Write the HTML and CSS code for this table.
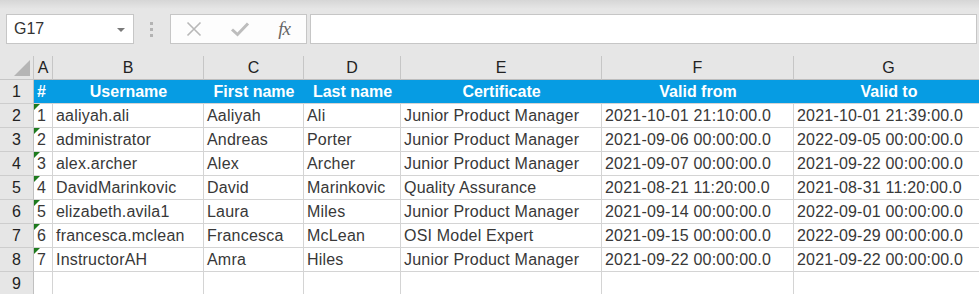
FILE: index.html
```html
<!DOCTYPE html>
<html lang="en">
<head>
    <meta charset="UTF-8">
    <meta name="viewport" content="width=device-width, initial-scale=1.0">
    <title>Certificates</title>
    <link rel="stylesheet" href="styles.css">
</head>
<body>
    <div class="formula-bar">
        <div class="name-box">
            <span>G17</span>
            <span class="caret"></span>
        </div>
        <div class="grip"><i></i><i></i><i></i></div>
        <div class="fx-buttons">
            <svg class="btn-icon" width="16" height="16" viewBox="0 0 16 16">
                <path d="M1.5 1.5 L14.5 14.5 M14.5 1.5 L1.5 14.5" stroke="#b8b8b8" stroke-width="1.6" fill="none"/>
            </svg>
            <svg class="btn-icon" width="20" height="16" viewBox="0 0 20 16">
                <path d="M2 8.5 L7.5 13.5 L18 2.5" stroke="#bdbdbd" stroke-width="3" fill="none"/>
            </svg>
            <span class="fx">fx</span>
        </div>
        <div class="formula-input"></div>
    </div>

    <div class="sheet">
        <!-- column letters -->
        <div class="corner"><span class="corner-mark"></span></div>
        <div class="col-head">A</div>
        <div class="col-head">B</div>
        <div class="col-head">C</div>
        <div class="col-head">D</div>
        <div class="col-head">E</div>
        <div class="col-head">F</div>
        <div class="col-head">G</div>

        <!-- row 1: titles -->
        <div class="row-head">1</div>
        <div class="title title-idx">#</div>
        <div class="title">Username</div>
        <div class="title">First name</div>
        <div class="title">Last name</div>
        <div class="title">Certificate</div>
        <div class="title">Valid from</div>
        <div class="title">Valid to</div>

        <div class="row-head">2</div>
        <div class="cell idx">1</div>
        <div class="cell">aaliyah.ali</div>
        <div class="cell">Aaliyah</div>
        <div class="cell">Ali</div>
        <div class="cell">Junior Product Manager</div>
        <div class="cell">2021-10-01 21:10:00.0</div>
        <div class="cell">2021-10-01 21:39:00.0</div>

        <div class="row-head">3</div>
        <div class="cell idx">2</div>
        <div class="cell">administrator</div>
        <div class="cell">Andreas</div>
        <div class="cell">Porter</div>
        <div class="cell">Junior Product Manager</div>
        <div class="cell">2021-09-06 00:00:00.0</div>
        <div class="cell">2022-09-05 00:00:00.0</div>

        <div class="row-head">4</div>
        <div class="cell idx">3</div>
        <div class="cell">alex.archer</div>
        <div class="cell">Alex</div>
        <div class="cell">Archer</div>
        <div class="cell">Junior Product Manager</div>
        <div class="cell">2021-09-07 00:00:00.0</div>
        <div class="cell">2021-09-22 00:00:00.0</div>

        <div class="row-head">5</div>
        <div class="cell idx">4</div>
        <div class="cell">DavidMarinkovic</div>
        <div class="cell">David</div>
        <div class="cell">Marinkovic</div>
        <div class="cell">Quality Assurance</div>
        <div class="cell">2021-08-21 11:20:00.0</div>
        <div class="cell">2021-08-31 11:20:00.0</div>

        <div class="row-head">6</div>
        <div class="cell idx">5</div>
        <div class="cell">elizabeth.avila1</div>
        <div class="cell">Laura</div>
        <div class="cell">Miles</div>
        <div class="cell">Junior Product Manager</div>
        <div class="cell">2021-09-14 00:00:00.0</div>
        <div class="cell">2022-09-01 00:00:00.0</div>

        <div class="row-head">7</div>
        <div class="cell idx">6</div>
        <div class="cell">francesca.mclean</div>
        <div class="cell">Francesca</div>
        <div class="cell">McLean</div>
        <div class="cell">OSI Model Expert</div>
        <div class="cell">2021-09-15 00:00:00.0</div>
        <div class="cell">2022-09-29 00:00:00.0</div>

        <div class="row-head">8</div>
        <div class="cell idx">7</div>
        <div class="cell">InstructorAH</div>
        <div class="cell">Amra</div>
        <div class="cell">Hiles</div>
        <div class="cell">Junior Product Manager</div>
        <div class="cell">2021-09-22 00:00:00.0</div>
        <div class="cell">2021-09-22 00:00:00.0</div>

        <div class="row-head">9</div>
        <div class="cell"></div>
        <div class="cell"></div>
        <div class="cell"></div>
        <div class="cell"></div>
        <div class="cell"></div>
        <div class="cell"></div>
        <div class="cell"></div>
    </div>
</body>
</html>
```

FILE: styles.css
```css
body {
    margin: 0;
    background-color: #e6e6e6;
    font-family: "Liberation Sans", Arial, sans-serif;
    font-size: 16px;
    overflow: hidden;
}

/* formula bar */
.formula-bar {
    display: flex;
    align-items: flex-start;
    height: 56px;
    box-sizing: border-box;
    padding: 14px 0 0 6px;
    background: linear-gradient(#d6d6d6, #e6e6e6 9px);
}
.name-box {
    display: flex;
    align-items: center;
    justify-content: space-between;
    width: 128px;
    height: 30px;
    box-sizing: border-box;
    padding: 0 8px 0 7px;
    background-color: #fff;
    border: 1px solid #c6c6c6;
    color: #333;
}
.caret {
    width: 0;
    height: 0;
    border-left: 4px solid transparent;
    border-right: 4px solid transparent;
    border-top: 4px solid #7a7a7a;
    margin-top: 1px;
}
.grip {
    display: flex;
    flex-direction: column;
    gap: 3px;
    margin: 8px 17px 0 16px;
}
.grip i {
    display: block;
    width: 3px;
    height: 3px;
    background-color: #b3b3b3;
}
.fx-buttons {
    display: flex;
    align-items: center;
    justify-content: space-between;
    width: 137px;
    height: 30px;
    box-sizing: border-box;
    padding: 0 16px 0 15px;
    background-color: #fdfdfd;
    border: 1px solid #c6c6c6;
}
.fx {
    font-family: "Liberation Serif", "Times New Roman", serif;
    font-style: italic;
    font-size: 19px;
    color: #666;
    letter-spacing: -1px;
}
.formula-input {
    flex: 1;
    height: 30px;
    box-sizing: border-box;
    margin: 0 2px 0 3px;
    background-color: #fff;
    border: 1px solid #c6c6c6;
}

/* sheet grid */
.sheet {
    display: grid;
    grid-template-columns: 34px 19px 151px 100px 97px 201px 192px 190px;
    grid-auto-rows: 24px;
    width: 984px;
    color: #383838;
}
.sheet > div {
    box-sizing: border-box;
    line-height: 23px;
    white-space: nowrap;
    overflow: hidden;
}
.corner {
    position: relative;
    border-right: 1px solid #c6c6c6;
    border-bottom: 1px solid #c6c6c6;
}
.corner-mark {
    position: absolute;
    right: 3px;
    bottom: 3px;
    width: 16px;
    height: 16px;
    background-color: #b5b5b5;
    clip-path: polygon(100% 0, 100% 100%, 0 100%);
}
.col-head {
    text-align: center;
    color: #222;
    border-right: 1px solid #c6c6c6;
    border-bottom: 1px solid #bdbdbd;
}
.row-head {
    text-align: center;
    color: #222;
    border-right: 1px solid #c0c0c0;
    border-bottom: 1px solid #cdcdcd;
}
.title {
    text-align: center;
    font-weight: bold;
    color: #fff;
    background-color: #069ce3;
    border-bottom: 1px solid #d4d4d4;
}
.title-idx {
    text-align: left;
    padding-left: 3px;
}
.cell {
    position: relative;
    padding-left: 3px;
    letter-spacing: 0.2px;
    background-color: #fff;
    border-right: 1px solid #d4d4d4;
    border-bottom: 1px solid #d4d4d4;
}
.idx::before {
    content: "";
    position: absolute;
    top: 0;
    left: 0;
    border-top: 6px solid #1d7a1d;
    border-right: 6px solid transparent;
}
```
